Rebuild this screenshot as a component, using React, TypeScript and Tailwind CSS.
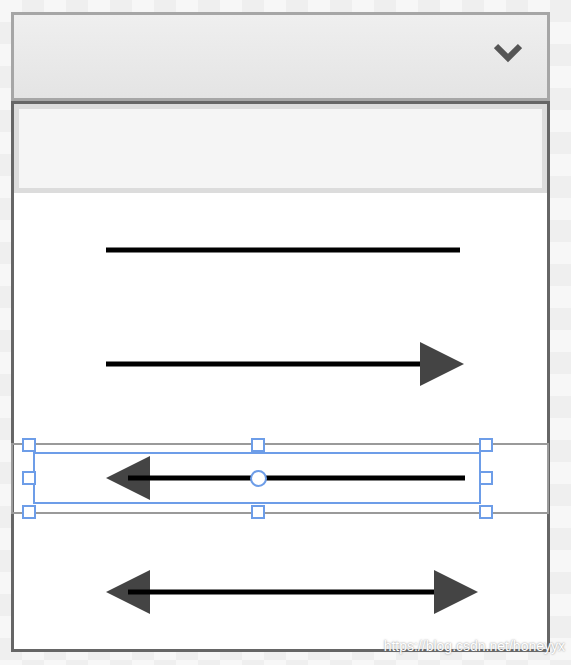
import type { ReactNode } from "react";

/* line-style picker: closed combo on top, open list of stroke styles below */

const TRI = "#444444";

function Stroke({ children }: { children: ReactNode }) {
  // the svg uses page x coordinates (the list's inner edge sits at x=14)
  return (
    <svg width="533" height="114" viewBox="14 0 533 114" className="block">
      {children}
    </svg>
  );
}

const leftHead = <polygon points="150,35 106,57 150,79" fill={TRI} />;
const rightHead = (x: number) => <polygon points={`${x},35 ${x + 44},57 ${x},79`} fill={TRI} />;
const bar = (x1: number, x2: number) => <line x1={x1} y1="57" x2={x2} y2="57" stroke="#000" strokeWidth="5" />;

function Handle({ x, y }: { x: number; y: number }) {
  return (
    <div
      className="absolute h-[14px] w-[14px] border-[2.5px] border-[#6d9de8] bg-white"
      style={{ left: x - 7, top: y - 7 }}
    />
  );
}

export default function App() {
  const hx = [15, 244, 472];
  const hy = [24, 90.5];

  return (
    <div
      className="relative h-[665px] w-[571px] overflow-hidden bg-[#f3f3f3] bg-[image:repeating-conic-gradient(#efefef_0%_25%,#f7f7f7_0%_50%)] bg-[length:44px_44px] px-[11px] pt-[12px]"
      style={{ fontFamily: '"Liberation Sans", Arial, sans-serif' }}
    >
      {/* closed combo */}
      <div className="flex h-[89px] w-[539px] items-center justify-end border-3 border-[#a6a6a6] bg-linear-to-b from-[#efefef] to-[#e4e4e4] pr-[25px] pb-[7px]">
        <svg width="28" height="22" viewBox="0 0 28 22">
          <polyline points="2,4 14,16 26,4" fill="none" stroke="#555" strokeWidth="6" />
        </svg>
      </div>

      {/* open list */}
      <div className="flex w-[539px] flex-col border-3 border-[#666666] bg-white">
        <div className="h-[89px] border-[5px] border-[#dcdcdc] bg-[#f5f5f5]" />

        <div className="h-[114px]">
          <Stroke>{bar(106, 460)}</Stroke>
        </div>

        <div className="h-[114px]">
          <Stroke>
            {bar(106, 421)}
            {rightHead(420)}
          </Stroke>
        </div>

        <div className="relative h-[114px]">
          <Stroke>
            {leftHead}
            {bar(128, 465)}
          </Stroke>
          {/* hovered row + selection frame */}
          <div className="absolute left-[-3px] top-[22px] h-[71px] w-[538px] border-2 border-[#9a9a9a]" />
          <div className="absolute left-[19px] top-[31px] h-[52px] w-[448px] border-[2.5px] border-[#6d9de8]" />
          {hx.map((x) => hy.map((y) => <Handle key={`${x}-${y}`} x={x} y={y} />))}
          <Handle x={15} y={57} />
          <Handle x={472} y={57} />
          <div className="absolute left-[236px] top-[49px] h-[17px] w-[17px] rounded-full border-[2.5px] border-[#6d9de8] bg-white" />
        </div>

        <div className="h-[114px]">
          <Stroke>
            {leftHead}
            {bar(128, 436)}
            {rightHead(434)}
          </Stroke>
        </div>
      </div>

      <div className="absolute right-[6px] top-[639px] text-[14px] leading-none text-white [text-shadow:0_0_2px_#7a7a7a]">
        https://blog.csdn.net/honeyyx
      </div>
    </div>
  );
}
